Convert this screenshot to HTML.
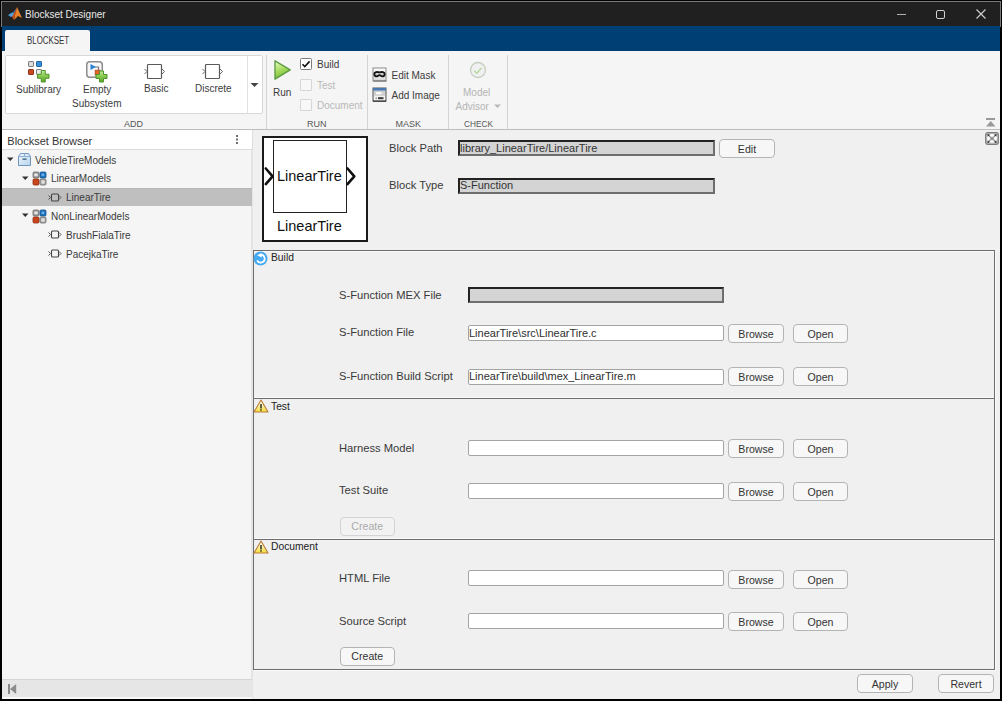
<!DOCTYPE html>
<html><head><meta charset="utf-8">
<style>
*{box-sizing:border-box;margin:0;padding:0}
html,body{width:1002px;height:701px;overflow:hidden;background:#000}
body{position:relative;font-family:"Liberation Sans",sans-serif;color:#333}
.a{position:absolute}
.t{position:absolute;white-space:nowrap;line-height:1}
.sep{position:absolute;width:1px;background:#d4d4d4}
.fld{position:absolute;background:#fff;border:1px solid #a4a4a4;border-radius:2px;height:16px}
.dis{position:absolute;background:#d4d4d4;border-top:2px solid #222;border-left:2px solid #222;border-right:2px solid #6e6e6e;border-bottom:2px solid #6e6e6e;height:16px}
.btn{position:absolute;background:#f7f7f7;border:1px solid #b4b4b4;border-radius:4px;height:19px;font-size:10.6px;line-height:18.2px;text-align:center;color:#333}
.lbl{position:absolute;white-space:nowrap;line-height:1;font-size:11.2px;color:#3a3a3a}
.ftx{position:absolute;white-space:nowrap;line-height:1;font-size:11px;color:#2e2e2e}
.rb{font-size:10px;color:#3c3c3c}
.tr{font-size:10px;color:#3a3a3a}
.sec{font-size:9px;color:#555}
</style></head><body>

<!-- window frame -->
<div class="a" style="left:1px;top:1px;width:1000px;height:26px;background:#7a7a7a"></div>
<div class="a" style="left:2px;top:2px;width:998px;height:24px;background:#202020"></div>
<div class="a" style="left:2px;top:26px;width:998px;height:673px;background:#f0f0f0"></div>

<!-- title bar -->
<svg class="a" style="left:7px;top:6px" width="17" height="15" viewBox="0 0 17 15">
  <polygon points="1,9 6,6 8,9 4,11" fill="#4fa3e0"/>
  <polygon points="6,6 10,2 8,9" fill="#2a6db0"/>
  <polygon points="10,1 15,12 11,10 7,14 8,9" fill="#e8822a"/>
  <polygon points="10,1 8,9 7,14 5,11" fill="#c8501a"/>
</svg>
<div class="t" style="left:25px;top:9.5px;font-size:10px;color:#e8e8e8">Blockset Designer</div>
<div class="a" style="left:896.5px;top:13.5px;width:9px;height:1px;background:#b0b0b0"></div>
<div class="a" style="left:936px;top:9.5px;width:9px;height:9px;border:1px solid #d0d0d0;border-radius:2px"></div>
<svg class="a" style="left:975px;top:8px" width="12" height="12" viewBox="0 0 12 12"><path d="M1.5 1.5L10.5 10.5M10.5 1.5L1.5 10.5" stroke="#d0d0d0" stroke-width="1.1"/></svg>

<!-- blue band -->
<div class="a" style="left:2px;top:26px;width:998px;height:25px;background:#003f74"></div>
<div class="a" style="left:5px;top:29.5px;width:85.3px;height:22px;background:#f5f5f5;border-radius:2px 2px 0 0"></div>
<div class="t" style="left:26.5px;top:35.5px;font-size:10px;color:#333;transform:scaleX(.79);transform-origin:0 0">BLOCKSET</div>

<!-- ribbon -->
<div class="a" style="left:2px;top:51px;width:998px;height:78px;background:#f5f5f5"></div>
<div class="a" style="left:2px;top:129px;width:998px;height:1px;background:#bdbdbd"></div>


<!-- ADD panel -->
<div class="a" style="left:5px;top:55px;width:258px;height:59px;background:#fff;border:1px solid #d8d8d8;border-radius:2px"></div>
<div class="a" style="left:247px;top:56px;width:1px;height:57px;background:#e2e2e2"></div>
<svg class="a" style="left:250px;top:82px" width="9" height="6" viewBox="0 0 9 6"><polygon points="0.5,1 8.5,1 4.5,5" fill="#444"/></svg>
<!-- Sublibrary icon -->
<svg class="a" style="left:27px;top:60px" width="24" height="24" viewBox="0 0 24 24">
  <defs><linearGradient id="pl" x1="0" y1="0" x2="0" y2="1"><stop offset="0" stop-color="#c4eaa0"/><stop offset=".5" stop-color="#86c84e"/><stop offset="1" stop-color="#5ea52e"/></linearGradient></defs>
  <rect x="1.5" y="1.5" width="5" height="5" rx=".6" fill="#dcdcdc" stroke="#7a7a7a" stroke-width="1"/>
  <rect x="9.5" y="1.5" width="5" height="5" rx=".6" fill="#3a8fd6" stroke="#1d63a4" stroke-width="1"/>
  <rect x="1.5" y="9.5" width="5" height="5" rx=".6" fill="#c84a22" stroke="#8e2f16" stroke-width="1"/>
  <rect x="9.5" y="9.5" width="5" height="5" rx=".6" fill="#ececec" stroke="#7a7a7a" stroke-width="1"/>
  <path d="M14.25 10.5h4v3.75h3.75v4h-3.75v3.75h-4v-3.75h-3.75v-4h3.75z" fill="url(#pl)" stroke="#4e9426" stroke-width="1"/>
</svg>
<div class="t rb" style="left:16px;top:84.9px">Sublibrary</div>
<!-- Empty subsystem icon -->
<svg class="a" style="left:85px;top:60px" width="24" height="24" viewBox="0 0 24 24">
  <rect x="1.75" y="1.75" width="15.5" height="15.5" rx="3" fill="#f8f8f8" stroke="#8c8c8c" stroke-width="1.5"/>
  <path d="M10 7h3.5v3.5" fill="none" stroke="#777" stroke-width="1.2"/>
  <polygon points="5.5,4 11,7 5.5,10" fill="#2a80d2"/>
  <rect x="10.2" y="10.2" width="4.8" height="4.8" fill="#e8652a" stroke="#b0441a" stroke-width=".8"/>
  <path d="M14.5 11h4v3.5h3.5v4h-3.5v3.5h-4v-3.5h-3.5v-4h3.5z" fill="url(#pl)" stroke="#4e9426" stroke-width="1"/>
</svg>
<div class="t rb" style="left:83px;top:84.9px">Empty</div>
<div class="t rb" style="left:72px;top:98.6px">Subsystem</div>
<!-- Basic -->
<svg class="a" style="left:143px;top:62px" width="24" height="18" viewBox="0 0 24 18">
  <rect x="4.5" y="2.5" width="14" height="14" rx=".8" fill="#fff" stroke="#5a5a5a" stroke-width="1.2"/>
  <path d="M1.5 7l2.5 2.5l-2.5 2.5M19 7l2.5 2.5l-2.5 2.5" fill="none" stroke="#666" stroke-width="1"/>
</svg>
<div class="t rb" style="left:144px;top:84.3px">Basic</div>
<svg class="a" style="left:201px;top:62px" width="24" height="18" viewBox="0 0 24 18">
  <rect x="4.5" y="2.5" width="14" height="14" rx=".8" fill="#fff" stroke="#5a5a5a" stroke-width="1.2"/>
  <path d="M1.5 7l2.5 2.5l-2.5 2.5M19 7l2.5 2.5l-2.5 2.5" fill="none" stroke="#666" stroke-width="1"/>
</svg>
<div class="t rb" style="left:195px;top:84.3px">Discrete</div>
<div class="t sec" style="left:124px;top:119.5px">ADD</div>

<div class="sep" style="left:266px;top:55px;height:74px"></div>
<!-- RUN -->
<svg class="a" style="left:273px;top:59px" width="19" height="22" viewBox="0 0 19 22">
  <defs><linearGradient id="gr" x1="0" y1="0" x2=".3" y2="1"><stop offset="0" stop-color="#f4ffe8"/><stop offset=".3" stop-color="#c8ec90"/><stop offset=".55" stop-color="#a8dc60"/><stop offset="1" stop-color="#78bc38"/></linearGradient></defs>
  <polygon points="2,1.8 17.2,10.9 2,20.2" fill="url(#gr)" stroke="#5e9c42" stroke-width="1.4" stroke-linejoin="round"/>
</svg>
<div class="t rb" style="left:273px;top:87.6px">Run</div>
<div class="a" style="left:299.5px;top:58px;width:12px;height:12px;border:1px solid #7c7c7c;background:#fff;border-radius:1.5px"></div>
<svg class="a" style="left:299.5px;top:58px" width="12" height="12" viewBox="0 0 12 12"><path d="M2.5 6.2l2.3 2.4l4.8-5.2" fill="none" stroke="#111" stroke-width="1.6"/></svg>
<div class="t rb" style="left:317px;top:60.1px">Build</div>
<div class="a" style="left:299.5px;top:79px;width:12px;height:12px;border:1px solid #d6d6d6;background:#f8f8f8;border-radius:1px"></div>
<div class="t rb" style="left:317px;top:81.3px;color:#b8b8b8">Test</div>
<div class="a" style="left:299.5px;top:99px;width:12px;height:12px;border:1px solid #d6d6d6;background:#f8f8f8;border-radius:1px"></div>
<div class="t rb" style="left:317px;top:101.2px;color:#b8b8b8">Document</div>
<div class="t sec" style="left:307px;top:119.5px">RUN</div>

<div class="sep" style="left:367px;top:55px;height:74px"></div>
<!-- MASK -->
<svg class="a" style="left:372px;top:67px" width="15" height="15" viewBox="0 0 15 15">
  <defs><linearGradient id="mk" x1="0" y1="0" x2="0" y2="1"><stop offset="0" stop-color="#fff"/><stop offset="1" stop-color="#d8d8d8"/></linearGradient></defs>
  <rect x="1" y="1" width="13" height="13" fill="url(#mk)" stroke="#8a8a8a" stroke-width="1"/>
  <path d="M1.5 14h13" stroke="#666" stroke-width="1"/>
  <path d="M2.3 7.2c0-2.3 2.8-2.6 5.2-1.9c2.4-0.7 5.2-0.4 5.2 1.9c0 2.3-2.6 2.8-4.2 1.3c-0.5-0.5-1.5-0.5-2 0c-1.6 1.5-4.2 1-4.2-1.3z" fill="#d0d0d0" stroke="#151515" stroke-width="1.9"/>
</svg>
<div class="t rb" style="left:391.5px;top:70.6px">Edit Mask</div>
<svg class="a" style="left:372px;top:87px" width="15" height="15" viewBox="0 0 15 15">
  <rect x="1" y="1" width="13" height="13" fill="#e2e2e2" stroke="#555" stroke-width="1"/>
  <rect x="1" y="1" width="13" height="2.6" fill="#4b79b2"/>
  <rect x="2" y="4" width="11" height="4.6" fill="#cfcfcf"/>
  <rect x="4" y="5.2" width="5.5" height="2" fill="#fff"/>
  <rect x="2" y="9.2" width="11" height="4" fill="#f4f4f4"/>
  <rect x="3.5" y="10.4" width="1.5" height="1.8" fill="#999"/>
  <rect x="6" y="10.2" width="5.5" height="2" fill="#3a3a3a"/>
  <path d="M1 14.2h13" stroke="#222" stroke-width="1"/>
</svg>
<div class="t rb" style="left:391.5px;top:91px">Add Image</div>
<div class="t sec" style="left:395.5px;top:119.5px">MASK</div>

<div class="sep" style="left:448px;top:55px;height:74px"></div>
<!-- CHECK -->
<svg class="a" style="left:469px;top:61px" width="18" height="18" viewBox="0 0 18 18">
  <circle cx="9" cy="9" r="7.5" fill="#f0f0f0" stroke="#c6cfbf" stroke-width="1.3"/>
  <path d="M5.2 9.8l2.6 2.4l4.6-5.2" fill="none" stroke="#b2d89c" stroke-width="1.3"/>
</svg>
<div class="t rb" style="left:463px;top:88px;color:#b4b4b4">Model</div>
<div class="t rb" style="left:455.5px;top:102.3px;color:#b4b4b4">Advisor</div>
<svg class="a" style="left:494px;top:104px" width="7" height="5" viewBox="0 0 7 5"><polygon points="0,0.5 7,0.5 3.5,4" fill="#b8b8b8"/></svg>
<div class="t sec" style="left:463.5px;top:119.5px;transform:scaleX(.92);transform-origin:0 0">CHECK</div>
<div class="sep" style="left:507px;top:55px;height:74px"></div>

<!-- collapse ribbon -->
<div class="a" style="left:986px;top:118px;width:9px;height:1.5px;background:#999"></div>
<svg class="a" style="left:986px;top:120px" width="10" height="7" viewBox="0 0 10 7"><polygon points="0,6.5 9.5,6.5 4.75,1" fill="#999"/></svg>


<!-- ============ BROWSER ============ -->
<div class="a" style="left:2px;top:130px;width:250px;height:569px;background:#f5f5f5"></div>
<div class="a" style="left:2px;top:130px;width:250px;height:19px;background:#fff"></div>
<div class="a" style="left:2px;top:149px;width:250px;height:1px;background:#dcdcdc"></div>
<div class="a" style="left:251px;top:150px;width:2px;height:549px;background:#e4e4e4"></div>
<div class="a" style="left:252px;top:130px;width:1px;height:20px;background:#dedede"></div>
<div class="t" style="left:7.3px;top:135.9px;font-size:11px;color:#333">Blockset Browser</div>
<svg class="a" style="left:235px;top:134px" width="4" height="11" viewBox="0 0 4 11"><rect x="1" y="1" width="2" height="2" fill="#6e6e6e"/><rect x="1" y="4.5" width="2" height="2" fill="#6e6e6e"/><rect x="1" y="8" width="2" height="2" fill="#6e6e6e"/></svg>
<!-- selection -->
<div class="a" style="left:2px;top:188px;width:250px;height:18px;background:#bfbfbf;border-top:1px solid #b6b6b6"></div>
<!-- tree arrows -->
<svg class="a" style="left:7px;top:157px" width="7" height="5" viewBox="0 0 7 5"><polygon points="0,0.5 6.5,0.5 3.25,4" fill="#333"/></svg>
<svg class="a" style="left:22px;top:176px" width="7" height="5" viewBox="0 0 7 5"><polygon points="0,0.5 6.5,0.5 3.25,4" fill="#333"/></svg>
<svg class="a" style="left:22px;top:213px" width="7" height="5" viewBox="0 0 7 5"><polygon points="0,0.5 6.5,0.5 3.25,4" fill="#333"/></svg>
<!-- VehicleTireModels icon -->
<svg class="a" style="left:17px;top:152px" width="15" height="15" viewBox="0 0 15 15">
  <defs><linearGradient id="bx" x1="0" y1="0" x2="1" y2="1"><stop offset="0" stop-color="#eef6fd"/><stop offset="1" stop-color="#b6d4ee"/></linearGradient></defs>
  <path d="M1.5 4.5l2-3h8l2 3v9h-12z" fill="url(#bx)" stroke="#6f97c0" stroke-width="1"/>
  <path d="M1.5 4.5h12M7.5 1.5v3" stroke="#8fb0d0" stroke-width="1"/>
  <rect x="5.5" y="6.5" width="4" height="1.3" fill="#3a5a7a"/>
</svg>
<div class="t tr" style="left:35px;top:155.6px">VehicleTireModels</div>
<!-- sublib icons -->
<svg class="a" style="left:32px;top:171px" width="15" height="15" viewBox="0 0 15 15">
  <rect x="1" y="1" width="6" height="6" rx="1.2" fill="#9a9a9a" stroke="#6a6a6a" stroke-width=".8"/>
  <rect x="2.3" y="2.6" width="3.4" height="2.6" fill="#e8e8e8"/>
  <rect x="8" y="1" width="6" height="6" rx="1.2" fill="#1f74c0" stroke="#12508a" stroke-width=".8"/>
  <rect x="9.6" y="2.6" width="2.6" height="2.4" fill="#6fb0e8"/>
  <rect x="1" y="8" width="6" height="6" rx="1.2" fill="#c9461c" stroke="#8e2f12" stroke-width=".8"/>
  <rect x="8" y="8" width="6" height="6" rx="1.2" fill="#a8a8a8" stroke="#6a6a6a" stroke-width=".8"/>
  <rect x="9.4" y="9.4" width="3.2" height="3.2" fill="#e4e4e4"/>
</svg>
<div class="t tr" style="left:51px;top:174.3px">LinearModels</div>
<svg class="a" style="left:48px;top:193px" width="14" height="9" viewBox="0 0 14 9">
  <rect x="3.5" y="1" width="7" height="7" rx="1" fill="none" stroke="#444" stroke-width="1.1"/>
  <path d="M.5 2.5l2 2l-2 2M11 2.5l2 2l-2 2" fill="none" stroke="#444" stroke-width=".9"/>
</svg>
<div class="t tr" style="left:66px;top:193.2px">LinearTire</div>
<svg class="a" style="left:32px;top:209px" width="15" height="15" viewBox="0 0 15 15">
  <rect x="1" y="1" width="6" height="6" rx="1.2" fill="#9a9a9a" stroke="#6a6a6a" stroke-width=".8"/>
  <rect x="2.3" y="2.6" width="3.4" height="2.6" fill="#e8e8e8"/>
  <rect x="8" y="1" width="6" height="6" rx="1.2" fill="#1f74c0" stroke="#12508a" stroke-width=".8"/>
  <rect x="9.6" y="2.6" width="2.6" height="2.4" fill="#6fb0e8"/>
  <rect x="1" y="8" width="6" height="6" rx="1.2" fill="#c9461c" stroke="#8e2f12" stroke-width=".8"/>
  <rect x="8" y="8" width="6" height="6" rx="1.2" fill="#a8a8a8" stroke="#6a6a6a" stroke-width=".8"/>
  <rect x="9.4" y="9.4" width="3.2" height="3.2" fill="#e4e4e4"/>
</svg>
<div class="t tr" style="left:51px;top:211.9px">NonLinearModels</div>
<svg class="a" style="left:48px;top:230px" width="14" height="9" viewBox="0 0 14 9">
  <rect x="3.5" y="1" width="7" height="7" rx="1" fill="none" stroke="#444" stroke-width="1.1"/>
  <path d="M.5 2.5l2 2l-2 2M11 2.5l2 2l-2 2" fill="none" stroke="#444" stroke-width=".9"/>
</svg>
<div class="t tr" style="left:66px;top:230.7px">BrushFialaTire</div>
<svg class="a" style="left:48px;top:249px" width="14" height="9" viewBox="0 0 14 9">
  <rect x="3.5" y="1" width="7" height="7" rx="1" fill="none" stroke="#444" stroke-width="1.1"/>
  <path d="M.5 2.5l2 2l-2 2M11 2.5l2 2l-2 2" fill="none" stroke="#444" stroke-width=".9"/>
</svg>
<div class="t tr" style="left:66px;top:249.6px">PacejkaTire</div>
<!-- bottom strip -->
<div class="a" style="left:2px;top:679px;width:250px;height:1px;background:#d4d4d4"></div>
<div class="a" style="left:2px;top:680px;width:250px;height:17px;background:#e6e6e6"></div>
<div class="a" style="left:2px;top:697px;width:250px;height:2px;background:#f8f8f8"></div>
<div class="a" style="left:8px;top:684px;width:1.6px;height:10px;background:#888"></div>
<svg class="a" style="left:9.5px;top:684px" width="7" height="10" viewBox="0 0 7 10"><polygon points="6.2,0 6.2,10 0,5" fill="#8c8c8c"/></svg>

<!-- ============ MAIN PANEL ============ -->
<div class="a" style="left:253px;top:130px;width:747px;height:569px;background:#f0f0f0"></div>
<!-- expand icon -->
<svg class="a" style="left:985px;top:132px" width="14" height="13" viewBox="0 0 14 13">
  <rect x=".7" y=".7" width="12.6" height="11.6" rx="2" fill="#c4c4c4" stroke="#7c7c7c" stroke-width="1.2"/>
  <path d="M3.5 3.2l7 6.6M10.5 3.2l-7 6.6" stroke="#6a6a6a" stroke-width=".9"/>
  <ellipse cx="7" cy="3.4" rx="1.9" ry="1.4" fill="#fff"/>
  <ellipse cx="7" cy="9.6" rx="1.9" ry="1.4" fill="#fff"/>
  <ellipse cx="3.4" cy="6.5" rx="1.4" ry="1.9" fill="#fff"/>
  <ellipse cx="10.6" cy="6.5" rx="1.4" ry="1.9" fill="#fff"/>
  <circle cx="3.3" cy="3.1" r="1" fill="#3a3a3a"/><circle cx="10.7" cy="3.1" r="1" fill="#3a3a3a"/>
  <circle cx="3.3" cy="9.9" r="1" fill="#3a3a3a"/><circle cx="10.7" cy="9.9" r="1" fill="#3a3a3a"/>
</svg>
<!-- block icon -->
<div class="a" style="left:262px;top:136px;width:106px;height:106px;background:#fff;border:2px solid #1a1a1a"></div>
<div class="a" style="left:272.5px;top:139.5px;width:74px;height:73px;border:1.5px solid #222"></div>
<svg class="a" style="left:262px;top:166px" width="96" height="20" viewBox="0 0 96 20">
  <path d="M3.8 2.5l6.8 7.8l-6.8 7.8M85.5 2.5l6.8 7.8l-6.8 7.8" fill="none" stroke="#111" stroke-width="2.6" stroke-linecap="round" stroke-linejoin="round"/>
</svg>
<div class="t" style="left:277px;top:168.6px;font-size:14.5px;color:#111">LinearTire</div>
<div class="t" style="left:277px;top:219px;font-size:14.5px;color:#111">LinearTire</div>

<div class="lbl" style="left:389px;top:142.6px">Block Path</div>
<div class="lbl" style="left:389px;top:180.1px">Block Type</div>
<div class="dis" style="left:458px;top:140px;width:257px"></div>
<div class="ftx" style="left:460px;top:143px;color:#333">library_LinearTire/LinearTire</div>
<div class="dis" style="left:458px;top:177.5px;width:257px"></div>
<div class="ftx" style="left:460px;top:179.5px;color:#333">S-Function</div>
<div class="btn" style="left:719px;top:139px;width:56px">Edit</div>

<!-- sections -->
<div class="a" style="left:253px;top:250px;width:742px;height:420px;border:1px solid #6e6e6e;box-shadow:inset 0 1px 0 #fafafa,1px 1px 0 #fafafa"></div>
<div class="a" style="left:254px;top:397px;width:740px;height:1px;background:#fafafa"></div>
<div class="a" style="left:254px;top:538px;width:740px;height:1px;background:#fafafa"></div>
<div class="a" style="left:254px;top:398px;width:741px;height:1px;background:#6e6e6e"></div>
<div class="a" style="left:254px;top:539px;width:741px;height:1px;background:#6e6e6e"></div>

<!-- Build header -->
<svg class="a" style="left:253px;top:250.5px" width="15" height="15" viewBox="0 0 15 15">
  <circle cx="7.5" cy="7.5" r="7" fill="#45a9f2"/>
  <path d="M4.1 9.4A4 4 0 1 0 7.6 3.6" fill="none" stroke="#fff" stroke-width="1.7"/>
  <polygon points="4.2,4.3 8.6,1.9 8.6,6.6" fill="#fff"/>
</svg>
<div class="t" style="left:271px;top:253.2px;font-size:10.3px;color:#222">Build</div>
<div class="lbl" style="left:339px;top:289.8px">S-Function MEX File</div>
<div class="dis" style="left:468px;top:287px;width:256px"></div>
<div class="lbl" style="left:339px;top:327.2px">S-Function File</div>
<div class="fld" style="left:468px;top:325px;width:256px"></div>
<div class="ftx" style="left:469px;top:327.7px">LinearTire\src\LinearTire.c</div>
<div class="btn" style="left:728px;top:324px;width:56px">Browse</div>
<div class="btn" style="left:793px;top:324px;width:55px">Open</div>
<div class="lbl" style="left:339px;top:371px">S-Function Build Script</div>
<div class="fld" style="left:468px;top:368.5px;width:256px"></div>
<div class="ftx" style="left:469px;top:371px">LinearTire\build\mex_LinearTire.m</div>
<div class="btn" style="left:728px;top:367px;width:56px">Browse</div>
<div class="btn" style="left:793px;top:367px;width:55px">Open</div>

<!-- Test header -->
<svg class="a" style="left:253px;top:399px" width="16" height="14" viewBox="0 0 16 14">
  <defs><linearGradient id="wy" x1="0" y1="0" x2="0" y2="1"><stop offset="0" stop-color="#fffbe6"/><stop offset=".45" stop-color="#fdf3b0"/><stop offset="1" stop-color="#f4dc30"/></linearGradient></defs>
  <polygon points="8,1 15,13 1,13" fill="url(#wy)" stroke="#b87a3a" stroke-width="1.1" stroke-linejoin="round"/>
  <rect x="7.3" y="5" width="1.4" height="4.5" fill="#222"/>
  <rect x="7.3" y="10.3" width="1.4" height="1.4" fill="#222"/>
</svg>
<div class="t" style="left:271px;top:401.5px;font-size:10.3px;color:#222">Test</div>
<div class="lbl" style="left:339px;top:442.5px">Harness Model</div>
<div class="fld" style="left:468px;top:440px;width:256px"></div>
<div class="btn" style="left:728px;top:439px;width:56px">Browse</div>
<div class="btn" style="left:793px;top:439px;width:55px">Open</div>
<div class="lbl" style="left:339px;top:484.9px">Test Suite</div>
<div class="fld" style="left:468px;top:482.5px;width:256px"></div>
<div class="btn" style="left:728px;top:482px;width:56px">Browse</div>
<div class="btn" style="left:793px;top:482px;width:55px">Open</div>
<div class="btn" style="left:339.5px;top:517px;width:55.5px;border-color:#d4d4d4;color:#aaa;background:#f2f2f2;line-height:16.5px">Create</div>

<!-- Document header -->
<svg class="a" style="left:253px;top:540px" width="16" height="14" viewBox="0 0 16 14">
  <polygon points="8,1 15,13 1,13" fill="url(#wy)" stroke="#b87a3a" stroke-width="1.1" stroke-linejoin="round"/>
  <rect x="7.3" y="5" width="1.4" height="4.5" fill="#222"/>
  <rect x="7.3" y="10.3" width="1.4" height="1.4" fill="#222"/>
</svg>
<div class="t" style="left:271px;top:542.2px;font-size:10.3px;color:#222">Document</div>
<div class="lbl" style="left:339px;top:572.6px">HTML File</div>
<div class="fld" style="left:468px;top:570px;width:256px"></div>
<div class="btn" style="left:728px;top:569.5px;width:56px">Browse</div>
<div class="btn" style="left:793px;top:569.5px;width:55px">Open</div>
<div class="lbl" style="left:339px;top:615.9px">Source Script</div>
<div class="fld" style="left:468px;top:613px;width:256px"></div>
<div class="btn" style="left:728px;top:612px;width:56px">Browse</div>
<div class="btn" style="left:793px;top:612px;width:55px">Open</div>
<div class="btn" style="left:339.5px;top:647px;width:55.5px;line-height:16.5px">Create</div>

<div class="btn" style="left:857px;top:673.5px;width:56px">Apply</div>
<div class="btn" style="left:938px;top:673.5px;width:56px">Revert</div>

</body></html>
